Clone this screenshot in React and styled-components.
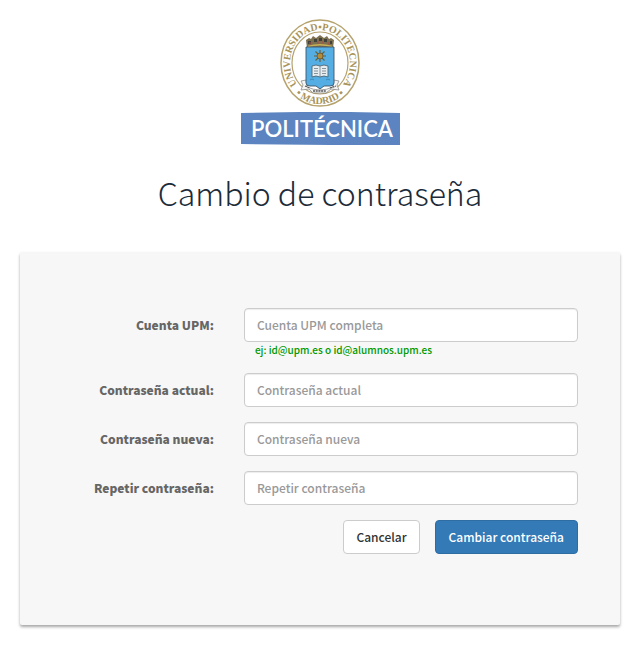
import React from "react";
import styled, { createGlobalStyle } from "styled-components";

const GlobalStyle = createGlobalStyle`
  *, *::before, *::after { box-sizing: border-box; }
  body {
    margin: 0;
    background: #fff;
    color: #333;
    font-family: "Source Sans Pro", "Noto Sans CJK SC", "Open Sans", sans-serif;
    font-size: 12px;
    line-height: 20px;
  }
`;

const Page = styled.main`
  padding: 18px 20px 24px;
`;

const Header = styled.header`
  display: flex;
  flex-direction: column;
  align-items: center;
`;

const Logo = styled.svg`
  display: block;
  width: 160px;
  height: 128px;
`;

const Title = styled.h1`
  margin: 23px 0 37px;
  color: #1c2b3a;
  font-size: 32px;
  font-weight: 300;
  line-height: 46px;
  text-align: center;
`;

const Card = styled.form`
  display: flex;
  flex-direction: column;
  gap: 15px;
  padding: 56px 42px 71px;
  background: #f7f7f7;
  border-radius: 2px;
  box-shadow: 0 2px 3px rgba(0, 0, 0, 0.35);
`;

const Row = styled.div`
  display: grid;
  grid-template-columns: 5fr 11fr;
  column-gap: 30px;
`;

const Label = styled.label`
  padding: 7px 0;
  color: #666;
  font-weight: 900;
  text-align: right;
  white-space: nowrap;
`;

const Input = styled.input`
  display: block;
  width: 100%;
  height: 34px;
  padding: 5px 12px 7px;
  border: 1px solid #ccc;
  border-radius: 4px;
  background: #fff;
  box-shadow: inset 0 1px 1px rgba(0, 0, 0, 0.075);
  color: #555;
  font: inherit;
  font-weight: 500;

  &::placeholder {
    color: #999;
    opacity: 1;
  }
`;

const Hint = styled.div`
  padding-left: 11px;
  color: #090;
  font-size: 10px;
  font-weight: 500;
  line-height: 16px;
`;

const Actions = styled.div`
  display: flex;
  justify-content: flex-end;
  gap: 15px;
`;

const Button = styled.button`
  height: 34px;
  padding: 6px ${(p) => (p.$primary ? "13px" : "12px")};
  border: 1px solid ${(p) => (p.$primary ? "#2e6da4" : "#ccc")};
  border-radius: 4px;
  background: ${(p) => (p.$primary ? "#337ab7" : "#fff")};
  color: ${(p) => (p.$primary ? "#fff" : "#333")};
  font: inherit;
  font-weight: 500;
  white-space: nowrap;
  cursor: pointer;
`;

const LogoText = styled.text`
  font-family: Lato, sans-serif;
  font-size: 22px;
  font-weight: 600;
  fill: #fff;
`;

const SealText = styled.text`
  font-family: "Liberation Serif", serif;
  font-size: 10px;
  font-weight: 700;
  fill: #a8935a;
`;

function UniversityLogo() {
  return (
    <Logo viewBox="0 0 160 128" role="img" aria-label="Universidad Politécnica de Madrid">
      <defs>
        <path id="seal-top" d="M80 78 A30 33 0 0 1 80 12 A30 33 0 0 1 80 78" />
        <path id="seal-bottom" d="M43 45 A37 41 0 0 0 117 45" />
      </defs>
      <ellipse cx="80" cy="45" rx="39" ry="43" fill="#fff" stroke="#b5a26d" strokeWidth="1.500" />
      <ellipse cx="80" cy="45" rx="28" ry="31" fill="#fff" stroke="#b5a26d" strokeWidth="1.200" />
      <SealText textAnchor="middle">
        <textPath href="#seal-top" startOffset="50%">UNIVERSIDAD▪POLITECNICA</textPath>
        <textPath href="#seal-bottom" startOffset="50%">▪ MADRID ▪</textPath>
      </SealText>

      <path d="M67 30 L66 22 L69 20 L71 21 L73 18 L76 20 L80 17 L84 20 L87 18 L89 21 L91 20 L94 22 L93 30 Z" fill="#7d704f" />
      <path d="M68 23h3v3h-3zM74 21h3v3h-3zM79 20h3v3h-3zM84 21h3v3h-3zM90 23h2v3h-2z" fill="#40413d" />
      <path d="M68 28.500 Q80 25 92 28.500" fill="none" stroke="#c7b056" strokeWidth="1.500" />
      <path d="M70 24v3M78 23v3M83 23v3M89 24v3" stroke="#b24c45" strokeWidth="1" />

      <path d="M61 63 L66 62 L67 69 Q80 75 93 69 L94 62 L99 63 L97 67 L99 72 L91 71 L86 75 H73 L69 71 L61 72 L63 67 Z" fill="#f5f5f3" stroke="#8b8c8b" strokeWidth="0.800" />
      <path d="M65 68l5 2M73 73h13M90 70l6-2" stroke="#55585c" strokeWidth="1.300" strokeDasharray="2 0.700" />
      <path d="M66 29 H94 V65 Q94 68 90 68 H84 L80 71 L76 68 H70 Q66 68 66 65 Z" fill="#55aee3" stroke="#3c556a" strokeWidth="0.900" />
      <path d="M80 32v12M74 38h12M75.500 33.500l9 9M84.500 33.500l-9 9" stroke="#6c6039" strokeWidth="1.200" />
      <circle cx="80" cy="38" r="3" fill="#b48d3c" stroke="#5c4e2b" strokeWidth="0.700" />
      <path d="M72 48 Q76 46 80 48 Q84 46 88 48 V59 Q84 57 80 59 Q76 57 72 59 Z" fill="#e6edf0" stroke="#4a6475" strokeWidth="0.900" />
      <path d="M80 48v11M74 50.500h4M74 53h4M74 55.500h4M82 50.500h4M82 53h4M82 55.500h4" stroke="#6d7c86" strokeWidth="0.800" />
      <path d="M70 62q2-2 4 0M86 62q2-2 4 0" fill="none" stroke="#347eab" strokeWidth="0.800" />

      <path d="M1 95 L60 94 L110 94 L160 95 V127 H90 L1 126 Z" fill="#5c84c1" />
      <LogoText x="82" y="119" textAnchor="middle">POLITÉCNICA</LogoText>
    </Logo>
  );
}

const fields = [
  { id: "account", label: "Cuenta UPM:", placeholder: "Cuenta UPM completa", type: "text", hint: "ej: id@upm.es o id@alumnos.upm.es" },
  { id: "current", label: "Contraseña actual:", placeholder: "Contraseña actual", type: "password" },
  { id: "next", label: "Contraseña nueva:", placeholder: "Contraseña nueva", type: "password" },
  { id: "repeat", label: "Repetir contraseña:", placeholder: "Repetir contraseña", type: "password" },
];

export default function App() {
  return (
    <>
      <GlobalStyle />
      <Page lang="es">
        <Header>
          <UniversityLogo />
          <Title>Cambio de contraseña</Title>
        </Header>
        <Card onSubmit={(e) => e.preventDefault()}>
          {fields.map((f) => (
            <Row key={f.id}>
              <Label htmlFor={f.id}>{f.label}</Label>
              <div>
                <Input
                  id={f.id}
                  type={f.type}
                  placeholder={f.placeholder}
                  aria-describedby={f.hint ? `${f.id}-hint` : undefined}
                />
                {f.hint && <Hint id={`${f.id}-hint`}>{f.hint}</Hint>}
              </div>
            </Row>
          ))}
          <Actions>
            <Button type="button">Cancelar</Button>
            <Button type="submit" $primary>Cambiar contraseña</Button>
          </Actions>
        </Card>
      </Page>
    </>
  );
}
